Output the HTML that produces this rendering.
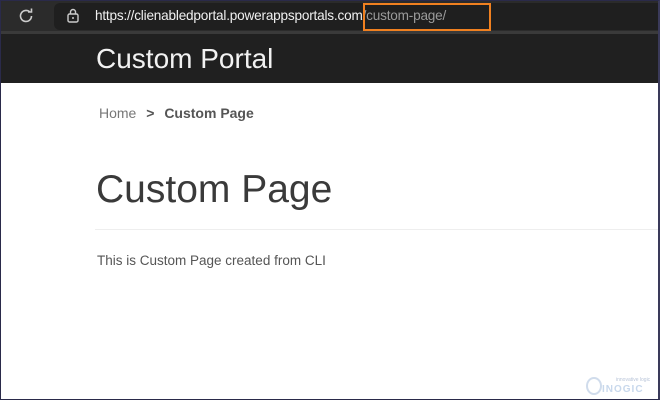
<!DOCTYPE html>
<html><head><meta charset="utf-8"><style>
html,body{margin:0;padding:0;}
body{width:660px;height:400px;overflow:hidden;background:#fff;font-family:"Liberation Sans",sans-serif;position:relative;}
.frame{position:absolute;inset:0;border:1px solid #2a2a4a;border-right:2px solid #3a3a5a;box-sizing:border-box;pointer-events:none;z-index:5;}
.top{position:absolute;left:0;top:0;width:660px;height:33px;background:#2b2b2b;}
.url{position:absolute;left:54px;top:3px;width:606px;height:27px;background:#1f1f1f;border-radius:6px 0 0 6px;}
.line{position:absolute;left:0;top:31px;width:660px;height:3px;background:#3a3a3a;}
.hdr{position:absolute;left:0;top:34px;width:660px;height:49px;background:#202020;}
.t{position:absolute;white-space:nowrap;}
</style></head><body>
<div class="top"></div>
<div class="url"></div>
<div class="line"></div>
<div class="hdr"></div>
<svg style="position:absolute;left:17px;top:7px" width="18" height="18" viewBox="0 0 18 18"><path d="M14.5 9a5.5 5.5 0 1 1-1.8-4.1" fill="none" stroke="#ccc" stroke-width="1.6"/><path d="M11 3.5h3.5V0" fill="none" stroke="#ccc" stroke-width="1.6" transform="translate(0,1.5)"/></svg>
<svg style="position:absolute;left:67px;top:8px" width="12" height="15" viewBox="0 0 12 15"><rect x="1" y="6" width="10" height="8" rx="1.5" fill="none" stroke="#ccc" stroke-width="1.4"/><path d="M3.5 6V4a2.5 2.5 0 0 1 5 0v2" fill="none" stroke="#ccc" stroke-width="1.4"/><circle cx="6" cy="10" r="1" fill="#ccc"/></svg>
<div class="t" style="left:95px;top:8px;font-size:13.6px;color:#f0f0f0;letter-spacing:-0.2px">https://clienabledportal.powerappsportals.com<span style="color:#9a9a9a">/custom-page/</span></div>
<div style="position:absolute;left:363px;top:3px;width:124px;height:24px;border:2px solid #f08020;"></div>
<div class="t" style="left:96px;top:43px;font-size:28px;color:#f2f2f2;">Custom Portal</div>
<div class="t" style="left:99px;top:105px;font-size:14px;color:#777;">Home <b style="color:#555;margin:0 6px">&gt;</b> <b style="color:#555">Custom Page</b></div>
<div class="t" style="left:96px;top:168px;font-size:39px;color:#3a3a3a;">Custom Page</div>
<div style="position:absolute;left:95px;top:229px;width:565px;height:1px;background:#eee;"></div>
<div class="t" style="left:97px;top:253px;font-size:13.5px;color:#555;">This is Custom Page created from CLI</div>
<div class="t" style="left:616px;top:377px;font-size:5px;color:#b8c4d8;">innovative logic</div>
<div class="t" style="left:602px;top:384px;font-size:10px;color:#c8d8ec;font-weight:bold;letter-spacing:1px">INOGIC</div>
<div style="position:absolute;left:586px;top:377px;width:12px;height:14px;border:2px solid #d0dcec;border-radius:50%;"></div>
<div class="frame"></div>
</body></html>
